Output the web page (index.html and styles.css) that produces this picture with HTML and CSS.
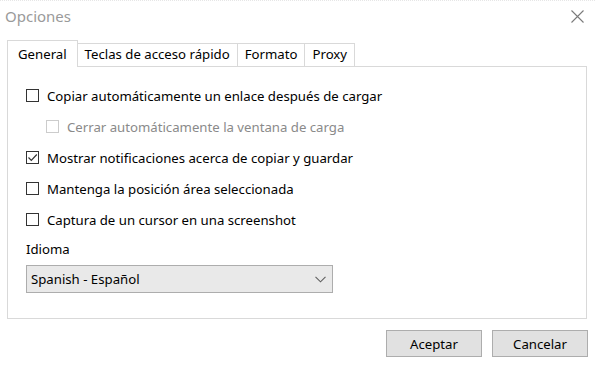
FILE: index.html
```html
<!DOCTYPE html>
<html lang="es">
<head>
    <meta charset="UTF-8">
    <link rel="stylesheet" href="styles.css">
    <title>Opciones</title>
</head>
<body>
    <div class="window">
        <div class="titlebar">
            <span class="title">Opciones</span>
            <span class="close">
                <svg width="13" height="13" viewBox="0 0 13 13"><path d="M0.5 0.5 L12.5 12.5 M12.5 0.5 L0.5 12.5" stroke="#7a7a7a" stroke-width="1.1" fill="none"/></svg>
            </span>
        </div>

        <div class="tabs">
            <div class="tab active">General</div>
            <div class="tab">Teclas de acceso rápido</div>
            <div class="tab">Formato</div>
            <div class="tab">Proxy</div>
        </div>

        <div class="panel">
            <div class="row">
                <span class="box"></span>
                <span>Copiar automáticamente un enlace después de cargar</span>
            </div>
            <div class="row sub disabled">
                <span class="box"></span>
                <span>Cerrar automáticamente la ventana de carga</span>
            </div>
            <div class="row">
                <span class="box checked">
                    <svg width="11" height="11" viewBox="0 0 11 11"><path d="M1.5 5.5 L4.3 8.3 L9.8 2.5" stroke="#333" stroke-width="1.2" fill="none"/></svg>
                </span>
                <span>Mostrar notificaciones acerca de copiar y guardar</span>
            </div>
            <div class="row">
                <span class="box"></span>
                <span>Mantenga la posición área seleccionada</span>
            </div>
            <div class="row">
                <span class="box"></span>
                <span>Captura de un cursor en una screenshot</span>
            </div>

            <div class="label">Idioma</div>
            <div class="select">
                <span>Spanish - Español</span>
                <svg width="11" height="7" viewBox="0 0 11 7"><path d="M0.5 0.8 L5.5 5.8 L10.5 0.8" stroke="#606060" stroke-width="1.1" fill="none"/></svg>
            </div>
        </div>

        <div class="footer">
            <button class="btn">Aceptar</button>
            <button class="btn">Cancelar</button>
        </div>
    </div>
</body>
</html>
```

FILE: styles.css
```css
body {
    margin: 0;
    padding: 0;
    background: white;
    font-family: 'Noto Sans', 'Open Sans', sans-serif;
    font-size: 13.2px;
    color: black;
}

.window {
    width: 595px;
    height: 367px;
    box-sizing: border-box;
    border-top: 1px dotted #e6e6e6;
    display: flex;
    flex-direction: column;
}

.titlebar {
    height: 33px;
    display: flex;
    align-items: center;
    justify-content: space-between;
    padding: 0 11px 0 5px;
    margin-top: -2px;
}

.title {
    color: #9a9a9a;
    font-size: 15px;
}

.close {
    display: flex;
    margin-top: 2px;
}

.tabs {
    display: flex;
    align-items: flex-end;
    margin: 8px 0 0 7px;
    height: 26px;
}

.tab {
    height: 22px;
    line-height: 21px;
    padding: 0 7px;
    border: 1px solid #d9d9d9;
    border-bottom: none;
    border-left: none;
    background: white;
}

.tab.active {
    height: 26px;
    line-height: 27px;
    padding: 0 10px;
    border-left: 1px solid #d9d9d9;
    margin-bottom: -1px;
    position: relative;
    z-index: 1;
}

.panel {
    margin: 0 8px 0 7px;
    height: 253px;
    box-sizing: border-box;
    border: 1px solid #d9d9d9;
    padding: 13px 18px 0 18px;
}

.row {
    height: 31px;
    display: flex;
    align-items: center;
    gap: 8px;
}

.row.sub {
    padding-left: 20px;
}

.row.disabled {
    color: #8a8a8a;
}

.box {
    width: 11px;
    height: 11px;
    border: 1px solid #333;
    display: flex;
    align-items: center;
    justify-content: center;
    flex-shrink: 0;
}

.row.disabled .box {
    border-color: #cccccc;
}

.label {
    margin-top: 5px;
    height: 18px;
    line-height: 18px;
}

.select {
    margin-top: 7px;
    width: 307px;
    height: 28px;
    box-sizing: border-box;
    border: 1px solid #adadad;
    background: #e9e9e9;
    display: flex;
    align-items: center;
    justify-content: space-between;
    padding: 0 6px 0 4px;
}

.footer {
    display: flex;
    justify-content: flex-end;
    gap: 10px;
    padding: 11px 7px 0 0;
}

.btn {
    width: 96px;
    height: 27px;
    border: 1px solid #adadad;
    background: #e1e1e1;
    font-family: inherit;
    font-size: 13.2px;
    color: black;
    padding: 0;
}
```
